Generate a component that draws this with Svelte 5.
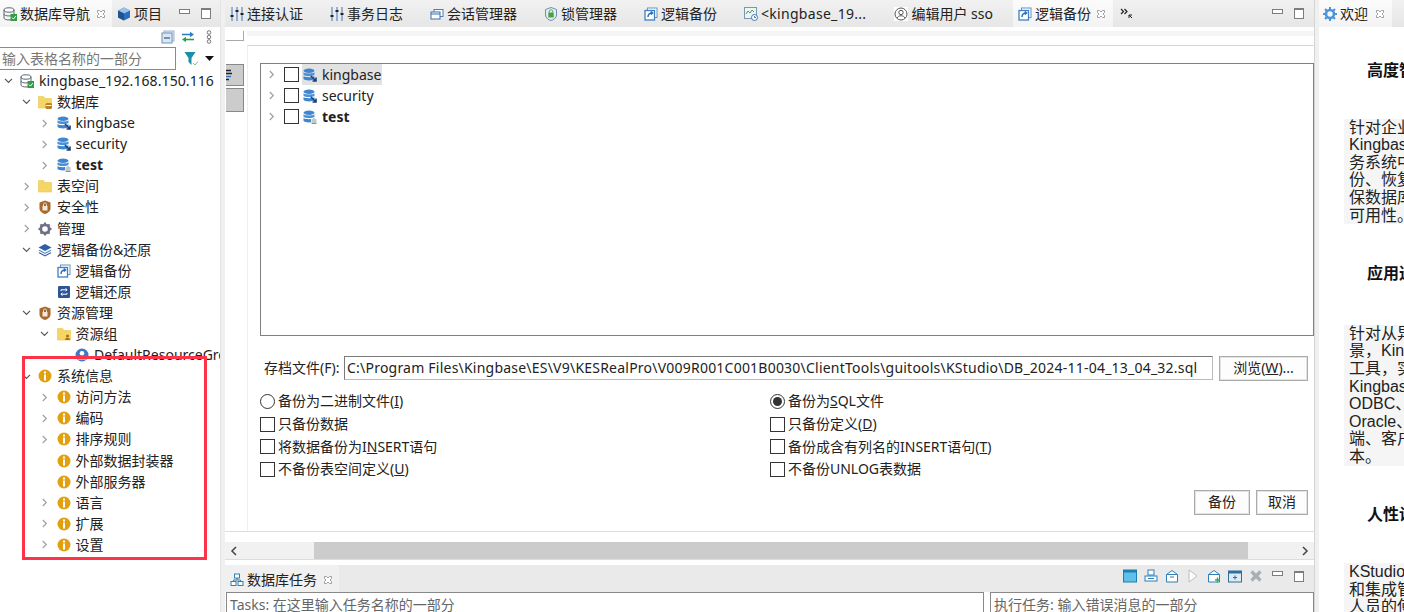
<script>
  const tree = [
    { l: 0, a: 'o', i: 'conn', t: 'kingbase_192.168.150.116' },
    { l: 1, a: 'o', i: 'folderdb', t: '数据库' },
    { l: 2, a: 'c', i: 'db', t: 'kingbase' },
    { l: 2, a: 'c', i: 'db', t: 'security' },
    { l: 2, a: 'c', i: 'dbg', t: 'test', b: true },
    { l: 1, a: 'c', i: 'folder', t: '表空间' },
    { l: 1, a: 'c', i: 'lock', t: '安全性' },
    { l: 1, a: 'c', i: 'gear', t: '管理' },
    { l: 1, a: 'o', i: 'layers', t: '逻辑备份&还原' },
    { l: 2, a: '', i: 'backup', t: '逻辑备份' },
    { l: 2, a: '', i: 'restore', t: '逻辑还原' },
    { l: 1, a: 'o', i: 'lock', t: '资源管理' },
    { l: 2, a: 'o', i: 'foldergrp', t: '资源组' },
    { l: 3, a: '', i: 'user', t: 'DefaultResourceGroup' },
    { l: 1, a: 'o', i: 'info', t: '系统信息' },
    { l: 2, a: 'c', i: 'info', t: '访问方法' },
    { l: 2, a: 'c', i: 'info', t: '编码' },
    { l: 2, a: 'c', i: 'info', t: '排序规则' },
    { l: 2, a: '', i: 'info', t: '外部数据封装器' },
    { l: 2, a: '', i: 'info', t: '外部服务器' },
    { l: 2, a: 'c', i: 'info', t: '语言' },
    { l: 2, a: 'c', i: 'info', t: '扩展' },
    { l: 2, a: 'c', i: 'info', t: '设置' }
  ];
  const tabs = [
    { i: 'sliders', t: '连接认证' },
    { i: 'sliders', t: '事务日志' },
    { i: 'windows', t: '会话管理器' },
    { i: 'shield', t: '锁管理器' },
    { i: 'backup', t: '逻辑备份' },
    { i: 'chart', t: '<kingbase_19...' },
    { i: 'person', t: '编辑用户 sso' }
  ];
  const dbs = [
    { t: 'kingbase', i: 'db', sel: true },
    { t: 'security', i: 'db' },
    { t: 'test', i: 'dbg', b: true }
  ];
</script>

{#snippet icon(n)}
  <svg class="ic" viewBox="0 0 14 14" width="14" height="14" aria-hidden="true">
    {#if n === 'db' || n === 'dbg'}
      <ellipse cx="6" cy="2.800" rx="5.500" ry="2.200" fill="#3f86d0" />
      <path d="M.5 4.200c1 1.600 10 1.600 11 0v2.600c-1 1.600-10 1.600-11 0z" fill="#4a90d9" />
      <path d="M.5 8c1 1.600 10 1.600 11 0v2.800c-1 2.200-10 2.200-11 0z" fill="#3f86d0" />
      {#if n === 'db'}
        <path d="M8 8l4.500 4.500M13 9.500V13H9.500" stroke="#1d3f78" stroke-width="1.600" fill="none" />
      {:else}
        <rect x="8" y="9" width="6" height="5" fill="#fff" />
        <path d="M8.500 10h5M8.500 12h5M8.500 13.600h5" stroke="#8a8f98" stroke-width="1.100" />
      {/if}
    {:else if n === 'conn'}
      <ellipse cx="6" cy="3" rx="5" ry="2.200" fill="#fff" stroke="#5c6670" />
      <path d="M1 3v8c0 2.600 10 2.600 10 0V3M1 7c0 2.600 10 2.600 10 0" fill="none" stroke="#5c6670" />
      <rect x="7.500" y="7" width="6.500" height="7" fill="#2f9e44" />
      <path d="M9 10.500l1.500 1.600 2.200-3" stroke="#fff" stroke-width="1" fill="none" />
    {:else if n === 'folder' || n === 'folderdb' || n === 'foldergrp'}
      <path d="M.5 1.500h5l1.500 2h6.500v9.500H.5z" fill="#f5d565" stroke="#e9c648" stroke-width=".6" />
      {#if n === 'folderdb'}
        <rect x="7.500" y="8" width="6.500" height="6" rx="1.500" fill="#b9822a" />
        <path d="M8 10.500h5.500" stroke="#fff" />
      {:else if n === 'foldergrp'}
        <circle cx="10.500" cy="9" r="1.500" fill="#a87012" />
        <path d="M8 13c0-3 5-3 5 0z" fill="#a87012" />
      {/if}
    {:else if n === 'lock'}
      <path d="M7 .5l5.500 2v6c0 3-3 4.600-5.500 5.500C4.500 13.100 1.500 11.500 1.500 8.500v-6z" fill="#a9682c" />
      <rect x="4.500" y="6" width="5" height="4.500" fill="#f3e9dc" />
      <path d="M5.500 6V4.500c0-2 3-2 3 0V6" fill="none" stroke="#f3e9dc" />
    {:else if n === 'gear'}
      <circle cx="7" cy="7" r="4.200" fill="none" stroke="#6f6f88" stroke-width="2.800" />
      <path d="M7 .5v3M7 10.500v3M.5 7h3M10.500 7h3M2.400 2.400l2 2M9.600 9.600l2 2M2.400 11.600l2-2M9.600 4.400l2-2" stroke="#6f6f88" stroke-width="2" />
    {:else if n === 'layers'}
      <path d="M7 1l6.500 3.500L7 8 .5 4.500z" fill="#2f5fa8" />
      <path d="M1.500 6.800L7 9.800l5.500-3 1 .7L7 11 .5 7.500z" fill="#5c88c8" />
      <path d="M1.500 9.300L7 12.300l5.500-3 1 .7L7 13.500.5 10z" fill="#2f5fa8" />
    {:else if n === 'backup'}
      <rect x="3.500" y="1" width="9.500" height="9.500" fill="#fff" stroke="#5f93cc" />
      <rect x="1" y="3.500" width="9.500" height="9.500" fill="#fff" stroke="#3f7fc4" stroke-width="1.300" />
      <path d="M4 10c0-3 2-4 4.500-4M6.800 4.500L8.600 6 6.800 7.500" stroke="#2f6db8" stroke-width="1.500" fill="none" />
    {:else if n === 'restore'}
      <rect x="1" y="1" width="12" height="12" rx="1" fill="#2f5496" />
      <path d="M4 6V4.800h6M8.500 3.500l1.600 1.300-1.600 1.300M10 8v1.200H4M5.500 7.900L3.900 9.200l1.600 1.300" stroke="#fff" fill="none" />
    {:else if n === 'user'}
      <circle cx="7" cy="7" r="6.500" fill="#3f78c4" />
      <circle cx="7" cy="5.300" r="2.300" fill="#fff" />
      <path d="M2.800 11.500c.8-3.400 7.600-3.400 8.400 0z" fill="#fff" />
    {:else if n === 'info'}
      <circle cx="7" cy="7" r="6.500" fill="#e0a010" />
      <rect x="6" y="2.500" width="2" height="2" fill="#fff" />
      <rect x="6" y="5.500" width="2" height="6" fill="#fff" />
    {:else if n === 'sliders'}
      <path d="M2 0v14M7 0v14M12 0v14" stroke="#3a76b8" stroke-width="1" />
      <path d="M.5 9h3M5.500 4h3M10.500 7h3" stroke="#222" stroke-width="2" />
    {:else if n === 'windows'}
      <rect x="4" y="2.500" width="9" height="7" fill="#fff" stroke="#4a7fb5" />
      <rect x="1" y="5" width="9" height="7" fill="#fff" stroke="#3a6fa8" />
      <path d="M1 7h9" stroke="#3a6fa8" />
    {:else if n === 'shield'}
      <path d="M7 .5l5.500 2v5.500c0 3-3 4.800-5.500 5.500-2.500-.7-5.500-2.500-5.500-5.500V2.500z" fill="#e2ecf5" stroke="#6b8fb5" />
      <rect x="4.300" y="5.500" width="5.400" height="5" fill="#4aa23e" />
      <path d="M5.300 5.500V4.300c0-2 3.400-2 3.400 0v1.200" fill="none" stroke="#4aa23e" />
    {:else if n === 'chart'}
      <rect x=".5" y=".5" width="12" height="11" fill="#eef3f7" stroke="#7a96b0" />
      <path d="M2 7l2-3 2 2 2-3 2 2" stroke="#4aa23e" fill="none" />
      <circle cx="10.500" cy="10.500" r="3" fill="#fff" stroke="#3a76b8" />
      <path d="M10.500 9v1.500h1.500" stroke="#3a76b8" fill="none" />
    {:else if n === 'person'}
      <rect width="14" height="14" fill="#fff" />
      <circle cx="7" cy="7" r="6" fill="none" stroke="#555" />
      <circle cx="7" cy="5.500" r="2.200" fill="none" stroke="#555" />
      <path d="M3 11c1-3 7-3 8 0" fill="none" stroke="#555" />
    {:else if n === 'cog'}
      <circle cx="7" cy="7" r="4" fill="none" stroke="#4a96d8" stroke-width="2.600" />
      <path d="M7 0v3M7 11v3M0 7h3M11 7h3M2 2l2 2M10 10l2 2M2 12l2-2M10 4l2-2" stroke="#4a96d8" stroke-width="2" />
    {:else if n === 'tasks'}
      <rect x="4.500" y="1" width="5" height="4" fill="#fff" stroke="#2f7fb8" />
      <rect x="1" y="8.500" width="5" height="4" fill="#fff" stroke="#2f7fb8" />
      <rect x="8" y="8.500" width="5" height="4" fill="#fff" stroke="#2f7fb8" />
      <path d="M7 5v2H3.500v1.500M7 7h3.500v1.500" stroke="#2f7fb8" fill="none" />
    {:else if n === 'project'}
      <path d="M7 .5l6 3v7l-6 3-6-3v-7z" fill="#2f6db8" />
      <path d="M7 .5l6 3-6 3-6-3z" fill="#9cc4ea" />
      <path d="M7 6.500v7l-6-3v-7z" fill="#1f558f" />
    {/if}
  </svg>
{/snippet}

{#snippet chev(a)}
  <span class="arrow">
    {#if a === 'o'}
      <svg viewBox="0 0 9 9" width="9" height="9"><path d="M1 2.800l3.500 3.500L8 2.800" fill="none" stroke="#555" stroke-width="1.200" /></svg>
    {:else if a === 'c'}
      <svg viewBox="0 0 9 9" width="9" height="9"><path d="M2.800 1l3.500 3.500L2.800 8" fill="none" stroke="#a0a0a0" stroke-width="1.200" /></svg>
    {/if}
  </span>
{/snippet}

{#snippet winctl()}
  <div class="winctl">
    <span class="min"></span>
    <span class="max"></span>
  </div>
{/snippet}

{#snippet close()}
  <svg class="x" viewBox="0 0 10 10" width="10" height="10" aria-hidden="true">
    <path d="M1.500 1.500h2L5 3l1.500-1.500h2v2L7 5l1.500 1.500v2h-2L5 7 3.500 8.500h-2v-2L3 5 1.500 3.500z" fill="#fff" stroke="#8a8a8a" stroke-width=".8" />
  </svg>
{/snippet}

<div class="app">
  <aside class="nav">
    <div class="bar">
      <div class="tab on navtab">{@render icon('conn')}<span>数据库导航</span>{@render close()}</div>
      <div class="tab projtab">{@render icon('project')}<span>项目</span></div>
      <div class="fill"></div>
      {@render winctl()}
    </div>
    <div class="navtools">
      <svg viewBox="0 0 14 14" width="14" height="14"><rect x="3" y="1" width="10" height="10" fill="#dbe7f2" stroke="#9db7cf" /><rect x="1" y="3" width="10" height="10" fill="#dbe7f2" stroke="#6f94b5" /><path d="M3 8h6" stroke="#3a6f9e" stroke-width="1.400" /></svg>
      <svg viewBox="0 0 14 14" width="14" height="14"><path d="M1 4.500h9" stroke="#2f7fc4" stroke-width="1.600" /><path d="M9 1.800l4 2.700-4 2.700z" fill="#2f7fc4" /><path d="M13 9.500H4" stroke="#2f9e44" stroke-width="1.600" /><path d="M5 6.800L1 9.500l4 2.700z" fill="#2f9e44" /></svg>
      <svg class="links" viewBox="0 0 10 14" width="10" height="14"><circle cx="5" cy="2.500" r="1.800" fill="none" stroke="#777" /><circle cx="5" cy="7" r="1.800" fill="none" stroke="#777" /><circle cx="5" cy="11.500" r="1.800" fill="none" stroke="#777" /></svg>
    </div>
    <div class="filter">
      <div class="search">输入表格名称的一部分</div>
      <svg viewBox="0 0 16 16" width="16" height="16"><path d="M.5 1h11L7.500 7v7L4.500 11V7z" fill="#1c8fa8" /><path d="M9 12l2 2 3-3.500" fill="none" stroke="#7cc08a" /></svg>
      <svg viewBox="0 0 9 5" width="9" height="5"><path d="M0 0h9L4.500 5z" fill="#111" /></svg>
    </div>
    <div class="tree">
      {#each tree as r}
        <div class={'row l' + r.l}>
          {@render chev(r.a)}
          {@render icon(r.i)}
          <span class:bold={r.b}>{r.t}</span>
        </div>
      {/each}
    </div>
    <div class="annot"></div>
  </aside>

  <main class="center">
    <div class="bar">
      {#each tabs as t}
        <div class="tab etab">{@render icon(t.i)}<span>{t.t}</span></div>
      {/each}
      <div class="tab on acttab">{@render icon('backup')}<span>逻辑备份</span>{@render close()}</div>
      <div class="more">
        <svg viewBox="0 0 14 14" width="14" height="14"><path d="M1 2l2.500 2.500L1 7M4.500 2L7 4.500 4.500 7" fill="none" stroke="#222" stroke-width="1.200" /><path d="M9 8l3 3M9 8v3M9 8h3" stroke="#222" stroke-width="1" fill="none" /></svg>
      </div>
      <div class="fill"></div>
      {@render winctl()}
    </div>
    <div class="editor">
      <div class="vscroll">
        <div class="vs-top"></div>
        <div class="vs-btn">
          <svg viewBox="0 0 8 12" width="8" height="12"><path d="M0 1.500h5M0 4.500h6M0 10.500h3" stroke="#222" stroke-width="1.300" /><path d="M0 7.500h5" stroke="#2f6db8" stroke-width="1.300" /></svg>
        </div>
        <div class="vs-thumb"></div>
      </div>
      <div class="formcol">
        <div class="band"></div>
        <div class="form">
          <div class="dbbox">
            {#each dbs as d}
              <div class="dbrow">
                {@render chev('c')}
                <span class="cb"></span>
                <span class="dbitem" class:sel={d.sel}>{@render icon(d.i)}<span class:bold={d.b}>{d.t}</span></span>
              </div>
            {/each}
          </div>
          <div class="filerow">
            <span class="filelabel">存档文件(F):</span>
            <div class="path">C:\Program Files\Kingbase\ES\V9\KESRealPro\V009R001C001B0030\ClientTools\guitools\KStudio\DB_2024-11-04_13_04_32.sql</div>
            <button class="btn browse">浏览(<u>W</u>)...</button>
          </div>
          <div class="opts">
            <label><span class="rb"></span><span>备份为二进制文件(<u>I</u>)</span></label>
            <label><span class="rb on"></span><span>备份为<u>S</u>QL文件</span></label>
            <label><span class="cb"></span><span>只备份数据</span></label>
            <label><span class="cb"></span><span>只备份定义(<u>D</u>)</span></label>
            <label><span class="cb"></span><span>将数据备份为I<u>N</u>SERT语句</span></label>
            <label><span class="cb"></span><span>备份成含有列名的INSERT语句(<u>T</u>)</span></label>
            <label><span class="cb"></span><span>不备份表空间定义(<u>U</u>)</span></label>
            <label><span class="cb"></span><span>不备份UNLOG表数据</span></label>
          </div>
          <div class="actions">
            <button class="btn act">备份</button>
            <button class="btn act">取消</button>
          </div>
        </div>
      </div>
    </div>
    <div class="hscroll">
      <svg viewBox="0 0 10 10" width="10" height="10"><path d="M7 1L3 5l4 4" fill="none" stroke="#444" stroke-width="1.500" /></svg>
      <div class="hs-track"><div class="hs-thumb"></div></div>
      <svg viewBox="0 0 10 10" width="10" height="10"><path d="M3 1l4 4-4 4" fill="none" stroke="#444" stroke-width="1.500" /></svg>
    </div>
    <div class="bottom">
      <div class="bar small">
        <div class="tab on taskstab">{@render icon('tasks')}<span>数据库任务</span>{@render close()}</div>
        <div class="fill"></div>
        <div class="tasktools">
          <svg viewBox="0 0 14 14" width="14" height="14"><rect x=".5" y="1" width="13" height="12" fill="#5fc0ea" stroke="#1f7fb0" /><rect x=".5" y="1" width="13" height="2.500" fill="#1f7fb0" /></svg>
          <svg viewBox="0 0 14 14" width="14" height="14"><rect x="4" y="1" width="6" height="5" fill="#fff" stroke="#2f7fb8" /><rect x="1" y="7" width="12" height="5" fill="#fff" stroke="#2f7fb8" /><path d="M4 9.500h6" stroke="#2f7fb8" /></svg>
          <svg viewBox="0 0 14 14" width="14" height="14"><path d="M1.500 5.500L7 1.500l5.500 4V13h-11z" fill="#fff" stroke="#2f7fb8" /><path d="M1.500 5.500h11M5 8h4" stroke="#2f7fb8" /></svg>
          <svg viewBox="0 0 14 14" width="14" height="14"><path d="M3 1l8 6-8 6z" fill="#fff" stroke="#b8c0c8" /></svg>
          <svg viewBox="0 0 14 14" width="14" height="14"><path d="M1.500 5.500L7 1.500l5.500 4V13h-11z" fill="#fff" stroke="#2f7fb8" /><path d="M1.500 5.500h11" stroke="#2f7fb8" /><path d="M10.500 8.500v5M8 11h5" stroke="#3aa655" stroke-width="1.400" /></svg>
          <svg viewBox="0 0 14 14" width="14" height="14"><rect x=".5" y="2" width="13" height="11" fill="#dceaf5" stroke="#2f6f9e" /><rect x=".5" y="2" width="13" height="2.500" fill="#2f6f9e" /><path d="M7 6.500v4M5 8.500h4" stroke="#2f6f9e" /></svg>
          <svg viewBox="0 0 14 14" width="14" height="14"><path d="M2.500 2.500l9 9M11.500 2.500l-9 9" stroke="#a8aeb4" stroke-width="3.200" /></svg>
        </div>
        {@render winctl()}
      </div>
      <div class="taskinputs">
        <div class="tinput a">Tasks: 在这里输入任务名称的一部分</div>
        <div class="tinput b">执行任务: 输入错误消息的一部分</div>
      </div>
    </div>
  </main>

  <aside class="welcome">
    <div class="bar">
      <div class="tab on wtab">{@render icon('cog')}<span>欢迎</span>{@render close()}</div>
      <div class="fill"></div>
    </div>
    <div class="wbody">
      <h3 class="h1">高度智能化的管理</h3>
      <p class="p1">针对企业级数据库<br />Kingbase提供了丰富的<br />务系统中的数据库备<br />份、恢复等功能，确<br />保数据库的高可靠和<br />可用性。</p>
      <h3 class="h2">应用迁移与开发</h3>
      <p class="p2">针对从异构数据库迁移<br />景，Kingbase提供<br />工具，实现平滑过渡<br />Kingbase支持JDBC<br />ODBC、等多种接口<br />Oracle、MySQL的<br />端、客户端迁移成<br />本。</p>
      <h3 class="h3">人性设计与易用</h3>
      <p class="p3">KStudio工具提供了<br />和集成管理的能力<br />人员的使用门槛</p>
    </div>
  </aside>
</div>

<style>
  :global(body) { margin: 0; background: #fff; }
  .app {
    width: 1404px; height: 612px; overflow: hidden; display: flex; background: #f0f0f0;
    font: 14px/20px "Noto Sans", "Noto Sans CJK SC", sans-serif; color: #222;
  }
  .ic { flex: none; display: block; }
  .x { flex: none; }
  .fill { flex: 1; }
  .bold { font-weight: 700; }

  .bar { height: 27px; flex: none; display: flex; align-items: center; background: linear-gradient(#f1f1f1, #e6e6e6); white-space: nowrap; }
  .tab { display: flex; align-items: center; height: 27px; box-sizing: border-box; gap: 3px; }
  .tab span { padding-top: 1px; }
  .tab.on { background: linear-gradient(#fbfbfb, #f3f3f3); }

  .winctl { display: flex; gap: 11px; align-items: center; margin-right: 10px; }
  .min { width: 9px; height: 3px; border: 1px solid #7d7d7d; background: #fff; margin-bottom: 5px; }
  .max { width: 8px; height: 8px; border: 1px solid #7d7d7d; border-top-width: 2px; background: #fff; }

  .nav { width: 221px; flex: none; position: relative; display: flex; flex-direction: column; background: #fff; overflow: hidden; border-right: 1px solid #e4e4e4; box-sizing: border-box; }
  .nav .winctl { margin-right: 9px; }
  .navtab { width: 112px; padding-left: 3px; }
  .navtab .x { margin-left: 3px; }
  .projtab { padding-left: 5px; }
  .navtools { height: 20px; flex: none; display: flex; justify-content: flex-end; align-items: center; gap: 6px; padding-right: 6px; }
  .links { margin-left: 3px; }
  .filter { height: 23px; flex: none; display: flex; align-items: center; }
  .search { width: 176px; height: 23px; box-sizing: border-box; border: 1px solid #8a8a8a; border-left: none; line-height: 22px; padding-left: 2px; color: #777; margin-right: 8px; }
  .filter svg:last-child { margin-left: 5px; }
  .tree { flex: none; padding-top: .3px; }
  .row { height: 21.1px; display: flex; align-items: center; white-space: nowrap; }
  .l0 { padding-left: 2px; letter-spacing: .08px; }
  .l1 { padding-left: 20px; }
  .l2 { padding-left: 38.500px; }
  .l3 { padding-left: 57px; }
  .arrow { width: 12px; height: 12px; flex: none; margin-right: 6px; display: flex; align-items: center; justify-content: center; }
  .row .ic { margin-right: 5px; }
  .annot { position: absolute; left: 22px; top: 356px; width: 185px; height: 204px; box-sizing: border-box; border: 3px solid #ff3347; }

  .center { width: 1090px; margin-left: 4px; flex: none; display: flex; flex-direction: column; overflow: hidden; border-right: 1px solid #d4d4d4; box-sizing: border-box; background: #fff; }
  .etab { padding: 0 22px 0 5px; }
  .etab:nth-child(6) span { letter-spacing: .3px; }
  .etab:nth-child(6) { padding-right: 23px; }
  .etab:nth-child(7) { padding-right: 20px; }
  .acttab { padding: 0 7px 0 5px; }
  .acttab .x { margin-left: 2px; }
  .more { width: 20px; padding-left: 7px; display: flex; }
  .editor { flex: 1; display: flex; min-height: 0; padding-top: 4px; border-bottom: 1px solid #ddd; }
  .vscroll { width: 18px; margin-left: 1px; flex: none; display: flex; flex-direction: column; }
  .vs-top { height: 10px; flex: none; box-sizing: border-box; border: solid #aaa; border-width: 0 1px 1px 0; margin-bottom: 23px; }
  .vs-btn { height: 22px; flex: none; box-sizing: border-box; background: #ccc; border: solid #888; border-width: 1px 1px 1px 0; display: flex; align-items: center; overflow: hidden; }
  .vs-thumb { height: 24px; flex: none; box-sizing: border-box; margin-top: 2px; background: #ccc; border: solid #888; border-width: 1px 1px 1px 0; }
  .formcol { flex: 1; min-width: 0; margin-left: 3px; display: flex; flex-direction: column; }
  .band { height: 14px; flex: none; background: linear-gradient(#f5f5f5 36%, #fff 36%); }
  .form { flex: 1; border-left: 1px solid #efefef; border-top: 1px solid #d8d8d8; padding: 17px 0 0 12px; min-width: 0; }
  .dbbox { height: 273px; border: 1px solid #808080; box-sizing: border-box; margin-bottom: 20px; width: 1054px; background: #fff; }
  .dbrow { height: 21px; display: flex; align-items: center; padding-left: 4px; }
  .dbrow .arrow { margin-right: 7px; }
  .dbrow .cb { margin-right: 3px; }
  .dbitem { display: flex; align-items: center; gap: 5px; height: 21px; padding: 0 1px; }
  .dbitem.sel { background: #e2e2e2; }
  .cb { width: 13px; height: 13px; flex: none; border: 1px solid #333; background: #fff; display: inline-block; }
  .rb { width: 13px; height: 13px; flex: none; border: 1px solid #333; border-radius: 50%; background: #fff; display: inline-block; position: relative; }
  .rb.on::after { content: ""; position: absolute; left: 2px; top: 2px; width: 9px; height: 9px; border-radius: 50%; background: #333; }
  .filerow { display: flex; align-items: center; height: 24px; width: 1048px; padding-left: 4px; }
  .filelabel { width: 80px; flex: none; }
  .path { width: 869px; height: 24px; flex: none; box-sizing: border-box; border: 1px solid #7a7a7a; border-bottom-color: #bbb; border-right-color: #bbb; padding-left: 2px; line-height: 22px; white-space: nowrap; overflow: hidden; letter-spacing: .22px; }
  .btn { font: inherit; color: #222; background: #fdfdfd; border: 1px solid #ababab; outline: 1px solid #e2e2e2; outline-offset: -2px; padding: 0; height: 25px; box-sizing: border-box; }
  .browse { width: 89px; margin-left: 6px; }
  .opts { display: grid; grid-template-columns: 510px 1fr; grid-auto-rows: 22.7px; margin-top: 10px; width: 1050px; }
  .opts label { display: flex; align-items: center; gap: 3px; }
  .actions { display: flex; justify-content: flex-end; gap: 6px; width: 1048px; margin-top: 9px; }
  .act { width: 56px; }
  .act:last-child { width: 52px; }
  .hscroll { height: 17px; margin-top: 10px; flex: none; display: flex; align-items: center; background: #f1f1f1; border-bottom: 1px solid #ddd; }
  .hscroll svg { flex: none; margin: 0 4px; }
  .hs-track { flex: 1; height: 100%; margin-left: 71px; }
  .hs-thumb { height: 100%; width: 934px; background: #ccc; }
  .bottom { flex: none; margin-top: 5px; }
  .small { background: #eaeaea; }
  .small .winctl, .tasktools { margin-bottom: 5px; }
  .taskstab { width: 114px; padding-left: 5px; background: #f0f0f0 !important; }
  .taskstab .ic { margin-top: 2px; }
  .taskstab span { padding-top: 3px; }
  .taskstab .x { margin-left: 3px; margin-top: 2px; }
  .tasktools { display: flex; gap: 7px; margin-right: 9px; }
  .taskinputs { display: flex; gap: 6px; height: 20px; padding-left: 1px; }
  .tinput { box-sizing: border-box; border: 1px solid #888; border-bottom: none; padding-left: 3px; color: #666; line-height: 23px; height: 20px; overflow: hidden; white-space: nowrap; }
  .tinput.a { width: 758px; }
  .tinput.b { width: 324px; }

  .welcome { width: 85px; margin-left: 4px; flex: none; display: flex; flex-direction: column; overflow: hidden; background: #fff; box-sizing: border-box; }
  .wtab { width: 73px; padding-left: 4px; }
  .wtab .x { margin-left: 4px; }
  .wbody { white-space: nowrap; font-family: "Liberation Sans", "Noto Sans CJK SC", sans-serif; font-size: 16px; line-height: 17.600px; color: #222; overflow: hidden; }
  h3 { margin: 0; font-size: 16px; font-weight: 700; padding-left: 48px; color: #111; }
  p { margin: 0; background: #f5f5f5; padding: 0 0 0 5px; margin-left: 25px; }
  .h1 { margin-top: 35px; }
  .p1 { margin-top: 39px; }
  .h2 { margin-top: 41px; }
  .p2 { margin-top: 42px; }
  .h3 { margin-top: 40px; }
  .p3 { margin-top: 40px; }
</style>
